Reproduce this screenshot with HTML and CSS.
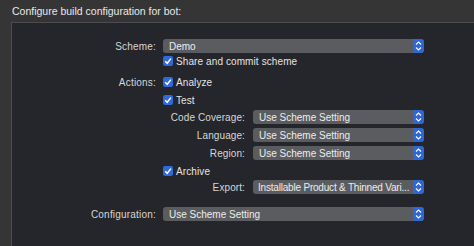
FILE: index.html
```html
<!DOCTYPE html>
<html lang="en">
<head>
    <meta charset="UTF-8">
    <title>Configure build configuration</title>
    <link rel="stylesheet" href="styles.css">
</head>
<body>

<div class="sheet">
    <div class="title">Configure build configuration for bot:</div>
    <div class="panel">
        <div class="row r-scheme">
            <div class="label">Scheme:</div>
            <div class="popup wide"><span class="value">Demo</span><span class="stepper"><svg width="7" height="10" viewBox="0 0 7 10"><path d="M1 3.5 L3.5 1 L6 3.5 M1 6.5 L3.5 9 L6 6.5" fill="none" stroke="#fff" stroke-width="1.1"/></svg></span></div>
        </div>
        <div class="row r-share">
            <div class="label"></div>
            <div class="check"><span class="box"><svg width="10" height="10" viewBox="0 0 10 10"><path d="M2.2 5.2 L4.2 7.3 L7.9 2.6" fill="none" stroke="#fff" stroke-width="1.5"/></svg></span>Share and commit scheme</div>
        </div>
        <div class="row r-actions">
            <div class="label">Actions:</div>
            <div class="check"><span class="box"><svg width="10" height="10" viewBox="0 0 10 10"><path d="M2.2 5.2 L4.2 7.3 L7.9 2.6" fill="none" stroke="#fff" stroke-width="1.5"/></svg></span>Analyze</div>
        </div>
        <div class="row r-tight">
            <div class="label"></div>
            <div class="check"><span class="box"><svg width="10" height="10" viewBox="0 0 10 10"><path d="M2.2 5.2 L4.2 7.3 L7.9 2.6" fill="none" stroke="#fff" stroke-width="1.5"/></svg></span>Test</div>
        </div>
        <div class="row r-sub1">
            <div class="label"></div>
            <div class="sub-label">Code Coverage:</div>
            <div class="popup narrow"><span class="value">Use Scheme Setting</span><span class="stepper"><svg width="7" height="10" viewBox="0 0 7 10"><path d="M1 3.5 L3.5 1 L6 3.5 M1 6.5 L3.5 9 L6 6.5" fill="none" stroke="#fff" stroke-width="1.1"/></svg></span></div>
        </div>
        <div class="row r-tight">
            <div class="label"></div>
            <div class="sub-label">Language:</div>
            <div class="popup narrow"><span class="value">Use Scheme Setting</span><span class="stepper"><svg width="7" height="10" viewBox="0 0 7 10"><path d="M1 3.5 L3.5 1 L6 3.5 M1 6.5 L3.5 9 L6 6.5" fill="none" stroke="#fff" stroke-width="1.1"/></svg></span></div>
        </div>
        <div class="row r-tight">
            <div class="label"></div>
            <div class="sub-label">Region:</div>
            <div class="popup narrow"><span class="value">Use Scheme Setting</span><span class="stepper"><svg width="7" height="10" viewBox="0 0 7 10"><path d="M1 3.5 L3.5 1 L6 3.5 M1 6.5 L3.5 9 L6 6.5" fill="none" stroke="#fff" stroke-width="1.1"/></svg></span></div>
        </div>
        <div class="row r-tight">
            <div class="label"></div>
            <div class="check"><span class="box"><svg width="10" height="10" viewBox="0 0 10 10"><path d="M2.2 5.2 L4.2 7.3 L7.9 2.6" fill="none" stroke="#fff" stroke-width="1.5"/></svg></span>Archive</div>
        </div>
        <div class="row">
            <div class="label"></div>
            <div class="sub-label">Export:</div>
            <div class="popup narrow"><span class="value long">Installable Product &amp; Thinned Vari...</span><span class="stepper"><svg width="7" height="10" viewBox="0 0 7 10"><path d="M1 3.5 L3.5 1 L6 3.5 M1 6.5 L3.5 9 L6 6.5" fill="none" stroke="#fff" stroke-width="1.1"/></svg></span></div>
        </div>
        <div class="row r-config">
            <div class="label">Configuration:</div>
            <div class="popup wide"><span class="value">Use Scheme Setting</span><span class="stepper"><svg width="7" height="10" viewBox="0 0 7 10"><path d="M1 3.5 L3.5 1 L6 3.5 M1 6.5 L3.5 9 L6 6.5" fill="none" stroke="#fff" stroke-width="1.1"/></svg></span></div>
        </div>
    </div>
</div>

</body>
</html>
```

FILE: styles.css
```css
html, body { margin: 0; padding: 0; }
body { width: 474px; height: 246px; overflow: hidden; background-color: #353536; font-family: "Liberation Sans", Arial, sans-serif; color: #dcdcdc; }
.sheet { padding: 4px 0 0 11px; }
.title { font-size: 10.5px; line-height: 14px; color: #e8e8e8; margin-left: 1px; height: 18px; }
.panel { width: 463px; height: 224px; background-color: #24262b; border: 1px solid #4d4d51; border-right: none; border-bottom: none; padding-top: 15px; box-sizing: border-box; }
.row { display: flex; align-items: center; height: 16px; font-size: 10px; }
.r-share { margin-top: -1px; }
.r-actions { margin-top: 5px; }
.r-tight { margin-top: 2px; }
.r-sub1 { margin-top: 1px; }
.r-config { margin-top: 11px; }
.label { width: 144px; flex: none; text-align: right; margin-right: 7px; color: #d6d6d6; letter-spacing: 0.2px; }
.sub-label { width: 82px; flex: none; text-align: right; margin-right: 8px; color: #d6d6d6; letter-spacing: 0.1px; }
.popup { display: flex; align-items: center; height: 14px; border-radius: 3px; background-color: #5b5c60; color: #ececec; overflow: hidden; }
.popup.wide { width: 261px; }
.popup.narrow { width: 171px; }
.popup .value { flex: 1; padding-left: 6px; white-space: nowrap; overflow: hidden; }
.popup .value.long { padding-left: 5px; letter-spacing: -0.2px; }
.stepper { width: 11px; height: 14px; flex: none; background-color: #2f66d8; display: flex; align-items: center; justify-content: center; border-radius: 0 3px 3px 0; }
.check { display: flex; align-items: center; color: #e4e4e4; letter-spacing: 0.1px; }
.box { width: 10px; height: 10px; border-radius: 2px; background-color: #2f69dc; margin-right: 3px; display: flex; }
```
